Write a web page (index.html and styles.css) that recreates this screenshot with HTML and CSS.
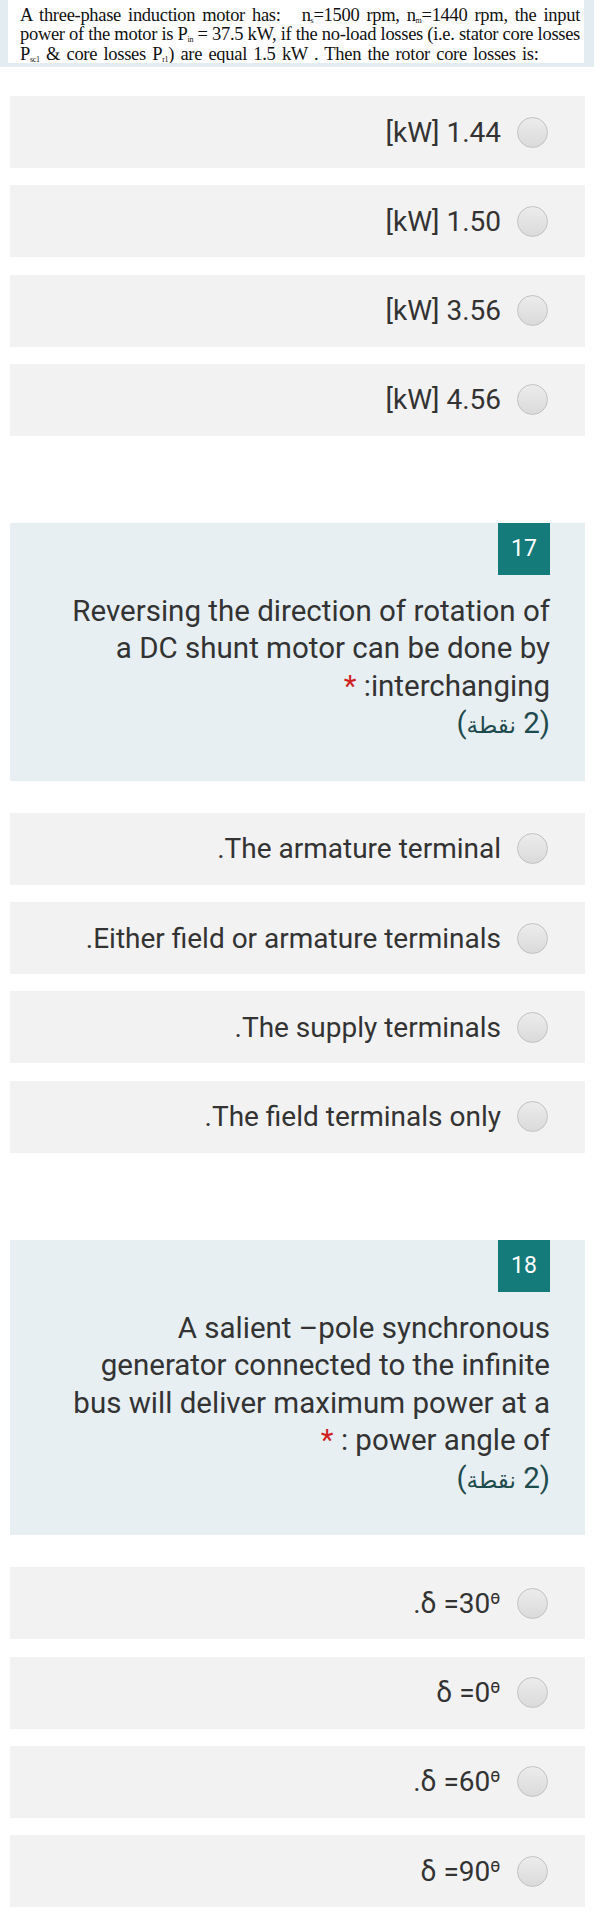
FILE: index.html
```html
<!DOCTYPE html>
<html lang="ar" dir="rtl">
<head>
<meta charset="utf-8">
<title>Quiz</title>
<link rel="stylesheet" href="styles.css">
</head>
<body>
<header class="stem" dir="ltr">
  <p class="stem-text">A three-phase induction motor has:&nbsp;&nbsp; n<sub>s</sub>=1500 rpm, n<sub>m</sub>=1440 rpm, the input power of the motor is P<sub>in</sub> = 37.5 kW, if the no-load losses (i.e. stator core losses <span class="stem-tail">P<sub>sc1</sub> &amp; core losses P<sub>r1</sub>) are equal 1.5 kW . Then the rotor core losses is:</span></p>
</header>

<main class="page">
  <section class="options">
    <label class="option"><span class="radio"></span><span class="option-text">1.44 [kW]</span></label>
    <label class="option"><span class="radio"></span><span class="option-text">1.50 [kW]</span></label>
    <label class="option"><span class="radio"></span><span class="option-text">3.56 [kW]</span></label>
    <label class="option"><span class="radio"></span><span class="option-text">4.56 [kW]</span></label>
  </section>

  <section class="question">
    <div class="badge">17</div>
    <p class="q-text">Reversing the direction of rotation of a DC shunt motor can be done by interchanging:<span class="req"> *</span></p>
    <p class="points">(2 <span class="ar">نقطة</span>)</p>
  </section>

  <section class="options after-q">
    <label class="option"><span class="radio"></span><span class="option-text">The armature terminal.</span></label>
    <label class="option"><span class="radio"></span><span class="option-text">Either field or armature terminals.</span></label>
    <label class="option"><span class="radio"></span><span class="option-text">The supply terminals.</span></label>
    <label class="option"><span class="radio"></span><span class="option-text">The field terminals only.</span></label>
  </section>

  <section class="question">
    <div class="badge">18</div>
    <p class="q-text">A salient –pole synchronous generator connected to the infinite bus will deliver maximum power at a power angle of :<span class="req"> *</span></p>
    <p class="points">(2 <span class="ar">نقطة</span>)</p>
  </section>

  <section class="options after-q">
    <label class="option"><span class="radio"></span><span class="option-text">δ =30<span class="deg">ᶿ</span>.</span></label>
    <label class="option"><span class="radio"></span><span class="option-text">δ =0<span class="deg">ᶿ</span></span></label>
    <label class="option"><span class="radio"></span><span class="option-text">δ =60<span class="deg">ᶿ</span>.</span></label>
    <label class="option"><span class="radio"></span><span class="option-text">δ =90<span class="deg">ᶿ</span></span></label>
  </section>
</main>
</body>
</html>
```
FILE: styles.css
```css
html, body {
  margin: 0;
  padding: 0;
  background: #ffffff;
}

body {
  font-family: Roboto, "Noto Sans", "DejaVu Sans", sans-serif;
  color: #333333;
  width: 611px;
}

.stem {
  box-sizing: border-box;
  width: 594px;
  height: 67px;
  overflow: hidden;
  margin-left: 0;
  margin-right: auto;
  background: #ffffff;
  border-left: 8px solid #e3edf1;
  border-right: 10px solid #e3edf1;
  border-bottom: 4px solid #e3edf1;
  padding: 5.5px 4px 0 12px;
}

.stem-text {
  margin: 0;
  font-family: "Liberation Serif", "Times New Roman", serif;
  font-size: 18.5px;
  letter-spacing: -0.3px;
  line-height: 19.5px;
  color: #111111;
  text-align: justify;
}

.stem-tail {
  word-spacing: 2px;
}

.stem-text sub {
  font-size: 8px;
  line-height: 0;
  vertical-align: -2px;
}

.page {
  padding: 0 26px 40px 10px;
}

.options {
  display: flex;
  flex-direction: column;
  gap: 17.3px;
  margin-top: 29px;
}

.options.after-q {
  margin-top: 32px;
}

.option {
  display: flex;
  align-items: center;
  gap: 16px;
  height: 72px;
  padding-inline-start: 37px;
  background: #f2f2f2;
}

.radio {
  flex: none;
  box-sizing: border-box;
  width: 31px;
  height: 31px;
  border-radius: 50%;
  border: 1px solid #c2c2c2;
  background: linear-gradient(#ececec, #dadada);
}

.option-text {
  font-size: 28px;
  color: #333333;
}

.deg {
  font-family: "DejaVu Sans", sans-serif;
  font-size: 26px;
}

.question {
  margin-top: 87px;
  background: #e7eff2;
  padding: 0 35px 38px 52px;
}

.badge {
  width: 52px;
  height: 52px;
  background: #157a7a;
  color: #ffffff;
  font-size: 23px;
  display: flex;
  align-items: center;
  justify-content: center;
}

.q-text {
  margin: 18px 0 0 0;
  font-size: 29.5px;
  line-height: 37.5px;
  color: #333333;
}

.req {
  color: #d01f1f;
}

.points {
  margin: 0;
  font-size: 29.5px;
  line-height: 37.5px;
  color: #1e4b4d;
}

.points .ar {
  font-family: "DejaVu Sans", sans-serif;
  font-size: 23px;
  line-height: 1;
}
```
